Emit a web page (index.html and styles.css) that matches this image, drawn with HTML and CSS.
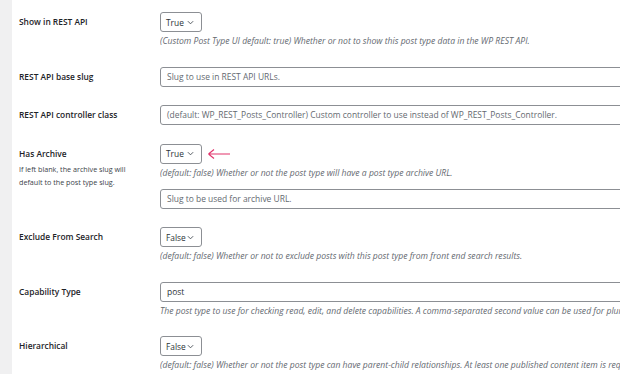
FILE: index.html
```html
<!DOCTYPE html>
<html>
<head>
<meta charset="utf-8">
<link rel="stylesheet" href="styles.css">
</head>
<body>
<div class="page">
  <div class="sidebar-strip"></div>
  <div class="panel">
    <div class="row">
      <div class="th"><span class="label">Show in REST API</span></div>
      <div class="td">
        <div class="select">True<svg class="chev" viewBox="0 0 8 5" width="7" height="5"><path d="M1 1 L4 4 L7 1" fill="none" stroke="#50575e" stroke-width="1.1"/></svg></div>
        <p class="hint">(Custom Post Type UI default: true) Whether or not to show this post type data in the WP REST API.</p>
      </div>
    </div>
    <div class="row">
      <div class="th"><span class="label">REST API base slug</span></div>
      <div class="td">
        <div class="input placeholder">Slug to use in REST API URLs.</div>
      </div>
    </div>
    <div class="row">
      <div class="th"><span class="label">REST API controller class</span></div>
      <div class="td">
        <div class="input placeholder">(default: WP_REST_Posts_Controller) Custom controller to use instead of WP_REST_Posts_Controller.</div>
      </div>
    </div>
    <div class="row">
      <div class="th">
        <span class="label">Has Archive</span>
        <p class="desc">If left blank, the archive slug will default to the post type slug.</p>
      </div>
      <div class="td">
        <div class="select-line">
          <div class="select">True<svg class="chev" viewBox="0 0 8 5" width="7" height="5"><path d="M1 1 L4 4 L7 1" fill="none" stroke="#50575e" stroke-width="1.1"/></svg></div>
          <svg class="pointer" viewBox="0 0 24 12" width="24" height="12"><path d="M1.5 6 H23 M1.5 6 L7 1.5 M1.5 6 L7 10.5" fill="none" stroke="#e2336b" stroke-width="1.1"/></svg>
        </div>
        <p class="hint">(default: false) Whether or not the post type will have a post type archive URL.</p>
        <div class="input placeholder spaced">Slug to be used for archive URL.</div>
      </div>
    </div>
    <div class="row">
      <div class="th"><span class="label">Exclude From Search</span></div>
      <div class="td">
        <div class="select">False<svg class="chev" viewBox="0 0 8 5" width="7" height="5"><path d="M1 1 L4 4 L7 1" fill="none" stroke="#50575e" stroke-width="1.1"/></svg></div>
        <p class="hint">(default: false) Whether or not to exclude posts with this post type from front end search results.</p>
      </div>
    </div>
    <div class="row">
      <div class="th"><span class="label">Capability Type</span></div>
      <div class="td">
        <div class="input value">post</div>
        <p class="hint">The post type to use for checking read, edit, and delete capabilities. A comma-separated second value can be used for plural version.</p>
      </div>
    </div>
    <div class="row">
      <div class="th"><span class="label">Hierarchical</span></div>
      <div class="td">
        <div class="select">False<svg class="chev" viewBox="0 0 8 5" width="7" height="5"><path d="M1 1 L4 4 L7 1" fill="none" stroke="#50575e" stroke-width="1.1"/></svg></div>
        <p class="hint">(default: false) Whether or not the post type can have parent-child relationships. At least one published content item is required in order to select a parent.</p>
      </div>
    </div>
  </div>
</div>
</body>
</html>
```

FILE: styles.css
```css
html, body {
  margin: 0;
  padding: 0;
  background: #ffffff;
  overflow: hidden;
}
body {
  width: 620px;
  height: 374px;
  font-family: "Open Sans", "Noto Sans", sans-serif;
  color: #1d2327;
}
.page {
  display: flex;
  height: 374px;
}
.sidebar-strip {
  flex: 0 0 12px;
  background: #f0f0f1;
}
.panel {
  flex: 1 1 auto;
  padding: 2.5px 0 0 7px;
  background: #ffffff;
  min-width: 0;
  overflow: hidden;
}
.row {
  display: grid;
  grid-template-columns: 141px 1fr;
  padding: 9.5px 0 9px 0;
}
.th {
  min-width: 0;
}
.label {
  display: block;
  font-size: 8.4px;
  font-weight: 600;
  line-height: 20px;
  color: #1d2327;
  white-space: nowrap;
}
.desc {
  margin: -1px 0 0 0;
  font-size: 7.2px;
  line-height: 13px;
  color: #3c434a;
  width: 118px;
}
.td {
  min-width: 0;
  overflow: hidden;
}
.select-line {
  display: flex;
  align-items: center;
  gap: 5px;
}
.select {
  box-sizing: border-box;
  display: flex;
  align-items: center;
  justify-content: space-between;
  width: 42px;
  height: 20px;
  padding: 0 7px 0 5px;
  border: 1px solid #8c8f94;
  border-radius: 3px;
  font-size: 8.4px;
  color: #2c3338;
  background: #fff;
}
.chev {
  display: block;
}
.pointer {
  display: block;
}
.hint {
  margin: 2px 0 0 0;
  font-size: 8.6px;
  font-style: italic;
  line-height: 14px;
  color: #646970;
  white-space: nowrap;
}
.input {
  box-sizing: border-box;
  width: 480px;
  height: 20px;
  padding: 0 6px;
  border: 1px solid #8c8f94;
  border-radius: 3px;
  font-size: 8.45px;
  line-height: 18px;
  white-space: nowrap;
  overflow: hidden;
  background: #fff;
}
.input.spaced {
  margin-top: 9px;
}
.placeholder {
  color: #646970;
}
.value {
  color: #2c3338;
}
```
